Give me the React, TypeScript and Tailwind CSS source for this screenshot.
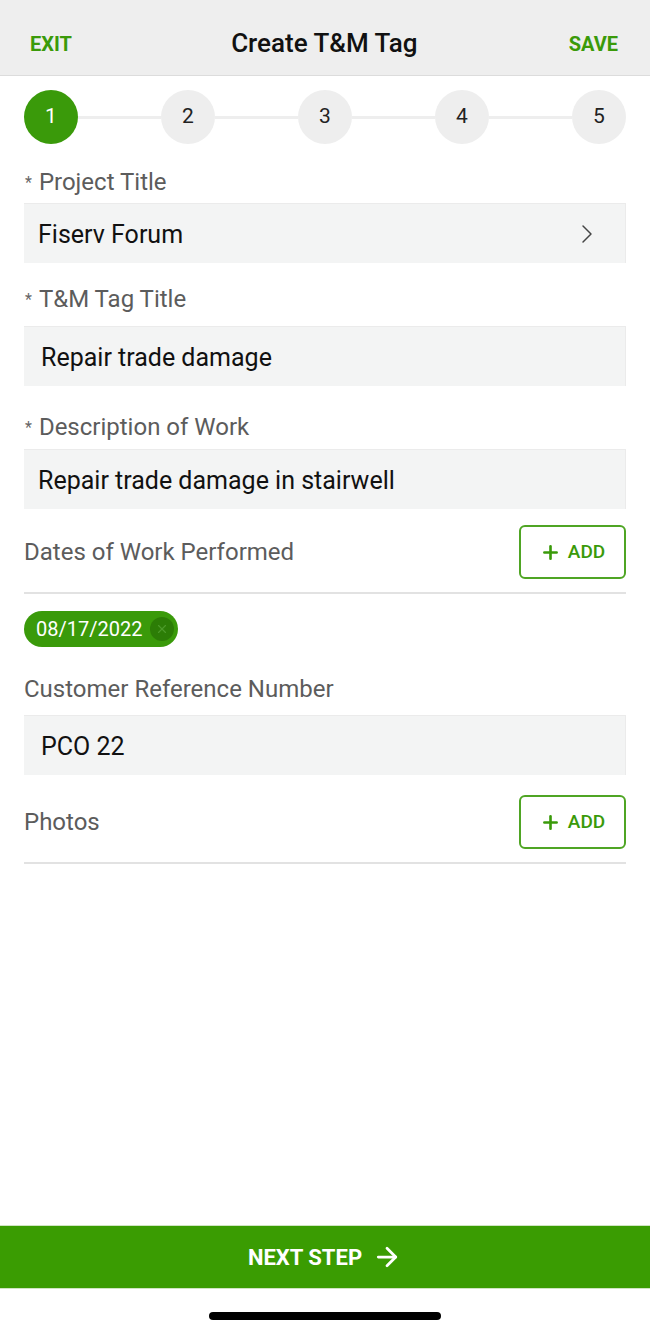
import { ChevronRight, Plus, ArrowRight, X } from 'lucide-react';

const GREEN = 'text-[#3a9a0a]';

function Label({ text, required, className = '' }: { text: string; required?: boolean; className?: string }) {
  return (
    <div className={`flex items-center h-[28px] text-[24px] leading-[28px] text-[#5c5c5c] ${className}`}>
      {required && <span className="text-[16px] ml-[1px] mr-[7px] mt-[2px] text-[#666]">*</span>}
      {text}
    </div>
  );
}

function Field({ value, pl = 'pl-[14px]', chevron }: { value: string; pl?: string; chevron?: boolean }) {
  return (
    <div className={`h-[60px] bg-[#f3f4f4] border-t border-r border-[#ebebeb] flex items-center justify-between ${pl} pr-[26px]`}>
      <span className="text-[25px] text-[#111] mt-[2px]">{value}</span>
      {chevron && <ChevronRight size={32} strokeWidth={1.1} className="text-[#444] mr-[-4px]" />}
    </div>
  );
}

function AddRow({ text, className = '' }: { text: string; className?: string }) {
  return (
    <div className={className}>
      <div className="flex items-center justify-between">
        <span className="text-[24px] text-[#5c5c5c]">{text}</span>
        <button className="w-[107px] h-[54px] border-2 border-[#4fa524] rounded-[6px] flex items-center justify-center gap-[7px] bg-white">
          <Plus size={21} strokeWidth={3} className="text-[#3a9a0a]" />
          <span className={`text-[19px] font-medium ${GREEN}`}>ADD</span>
        </button>
      </div>
      <div className="h-[2px] bg-[#e2e2e2] mt-[13px]" />
    </div>
  );
}

export default function App() {
  const steps = [1, 2, 3, 4, 5];
  return (
    <div className="h-[1343px] w-[650px] bg-white flex flex-col font-['Roboto',sans-serif]">
      {/* Header */}
      <div className="h-[76px] bg-[#eeeeee] border-b border-[#dcdcdc] flex items-center justify-between px-[30px] pt-[12px]">
        <span className={`text-[20px] font-bold ${GREEN}`}>EXIT</span>
        <span className="text-[26px] text-[#111] font-medium ml-[8px]">Create T&amp;M Tag</span>
        <span className={`text-[20px] font-bold ${GREEN} mr-[2px]`}>SAVE</span>
      </div>

      <div className="px-[24px] flex flex-col">
        {/* Stepper */}
        <div className="mt-[14px] flex items-center">
          {steps.map((s, i) => (
            <div key={s} className={`flex items-center ${i < steps.length - 1 ? 'flex-1' : ''}`}>
              <div
                className={`w-[54px] h-[54px] rounded-full flex items-center justify-center text-[21px] shrink-0 ${
                  s === 1 ? 'bg-[#3a9a0a] text-white' : 'bg-[#eeeeee] text-[#222]'
                }`}
              >
                {s}
              </div>
              {i < steps.length - 1 && <div className="flex-1 h-[3px] bg-[#eeeeee]" />}
            </div>
          ))}
        </div>

        <Label text="Project Title" required className="mt-[24px]" />
        <div className="mt-[7px]">
          <Field value="Fiserv Forum" chevron />
        </div>

        <Label text="T&M Tag Title" required className="mt-[22px]" />
        <div className="mt-[13px]">
          <Field value="Repair trade damage" pl="pl-[17px]" />
        </div>

        <Label text="Description of Work" required className="mt-[27px]" />
        <div className="mt-[8px]">
          <Field value="Repair trade damage in stairwell" />
        </div>

        <AddRow text="Dates of Work Performed" className="mt-[16px]" />

        <div className="mt-[17px] flex">
          <div className="h-[36px] rounded-full bg-[#3a9a0a] flex items-center pl-[12px] pr-[4px] gap-[8px]">
            <span className="text-[20px] text-white">08/17/2022</span>
            <span className="w-[24px] h-[24px] rounded-full bg-[#2c7d06] flex items-center justify-center">
              <X size={14} strokeWidth={2} className="text-[#4c9a2a]" />
            </span>
          </div>
        </div>

        <Label text="Customer Reference Number" className="mt-[28px]" />
        <div className="mt-[12px]">
          <Field value="PCO 22" pl="pl-[17px]" />
        </div>

        <AddRow text="Photos" className="mt-[20px]" />
      </div>

      <div className="flex-1" />

      {/* Bottom bar */}
      <button className="h-[64px] bg-[#3a9c02] flex items-center justify-center gap-[10px] border-y border-[#cfe5c2]">
        <span className="text-[22px] font-bold text-white">NEXT STEP</span>
        <ArrowRight size={30} strokeWidth={2.2} className="text-white" />
      </button>
      <div className="h-[54px] flex items-center justify-center">
        <div className="w-[232px] h-[8px] rounded-full bg-black" />
      </div>
    </div>
  );
}
